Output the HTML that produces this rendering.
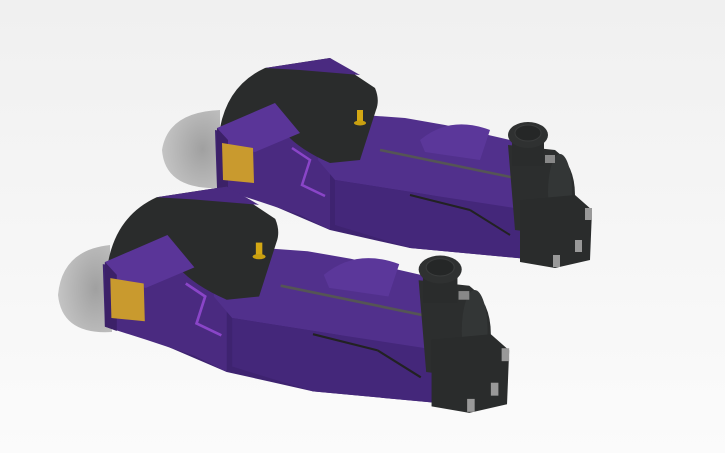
<!DOCTYPE html>
<html><head><meta charset="utf-8"><style>
html,body{margin:0;padding:0;width:725px;height:453px;overflow:hidden;background:#f6f6f6}
svg{display:block}
</style></head><body>
<svg width="725" height="453" viewBox="0 0 725 453" xmlns="http://www.w3.org/2000/svg">
<defs>
<linearGradient id="bg" x1="0" y1="0" x2="0" y2="1"><stop offset="0" stop-color="#f0f0f0"/><stop offset="1" stop-color="#fbfbfb"/></linearGradient>
<radialGradient id="sh" cx="0.7" cy="0.5" r="0.7"><stop offset="0" stop-color="#a0a0a0"/><stop offset="1" stop-color="#c4c4c4"/></radialGradient>
<g id="train">
  <polygon points="215,130 330,150 420,170 520,185 560,200 560,262 410,248 330,230 260,200 217,188" fill="#3e2370"/>
  <polygon points="217,128 320,140 330,165 330,230 300,215 255,200 217,188" fill="#4a2a80"/>
  <polygon points="320,112 405,118 445,125 510,140 560,160 560,215 510,210 430,195 335,180 318,160" fill="#51308c"/>
  <polygon points="335,180 430,195 560,215 560,262 410,248 335,225" fill="#44277a"/>
  <path d="M420,140 Q450,115 490,130 L480,160 L425,152 Z" fill="#5b379a"/>
  <line x1="380" y1="150" x2="525" y2="180" stroke="#555" stroke-width="2.5"/>
  <line x1="410" y1="195" x2="470" y2="210" stroke="#222" stroke-width="2"/>
  <line x1="470" y1="210" x2="510" y2="235" stroke="#222" stroke-width="2"/>
  <polyline points="292,148 310,160 302,185 325,196" fill="none" stroke="#8a45c8" stroke-width="2.5"/>
  <path d="M220,128 Q228,85 265,68 L330,58 L375,88 Q380,100 376,110 L360,160 L330,163 Q300,150 285,133 Z" fill="#2a2c2c"/>
  <polygon points="265,68 330,58 360,75 300,70" fill="#4a2a80"/>
  <polygon points="217,128 275,103 300,133 255,152 217,145" fill="#5a3598"/>
  <polygon points="217,128 217,188 228,192 228,140" fill="#3c2168"/>
  <polygon points="222,143 253,148 254,183 223,180" fill="#c99a2e"/>
  <rect x="357" y="110" width="6" height="12" fill="#d4a814"/>
  <ellipse cx="360" cy="123" rx="6" ry="2.5" fill="#c9a010"/>
  <path d="M508,145 L555,150 Q575,165 575,195 Q575,225 555,235 L515,230 Z" fill="#2c2e2e"/>
  <ellipse cx="560" cy="192" rx="12" ry="38" fill="#333636"/>
  <rect x="512" y="136" width="32" height="30" fill="#2a2c2c"/>
  <ellipse cx="528" cy="135" rx="20" ry="13" fill="#2f3131"/>
  <ellipse cx="528" cy="133" rx="13" ry="8" fill="#252727" stroke="#3a3c3c"/>
  <rect x="545" y="155" width="10" height="8" fill="#888"/>
  <polygon points="520,200 575,195 592,210 590,260 555,268 520,262" fill="#2a2c2c"/>
  <rect x="585" y="208" width="7" height="12" fill="#999"/>
  <rect x="575" y="240" width="7" height="12" fill="#999"/>
  <rect x="553" y="255" width="7" height="12" fill="#999"/>
</g>
</defs>
<rect width="725" height="453" fill="url(#bg)"/>
<path d="M220,110 Q168,112 162,150 Q165,190 220,188 Z" fill="url(#sh)"/>
<path d="M110,245 Q62,250 58,295 Q62,335 112,332 Z" fill="url(#sh)"/>
<use href="#train"/>
<use href="#train" transform="translate(-129,124) scale(1.078)"/>
</svg>
</body></html>
